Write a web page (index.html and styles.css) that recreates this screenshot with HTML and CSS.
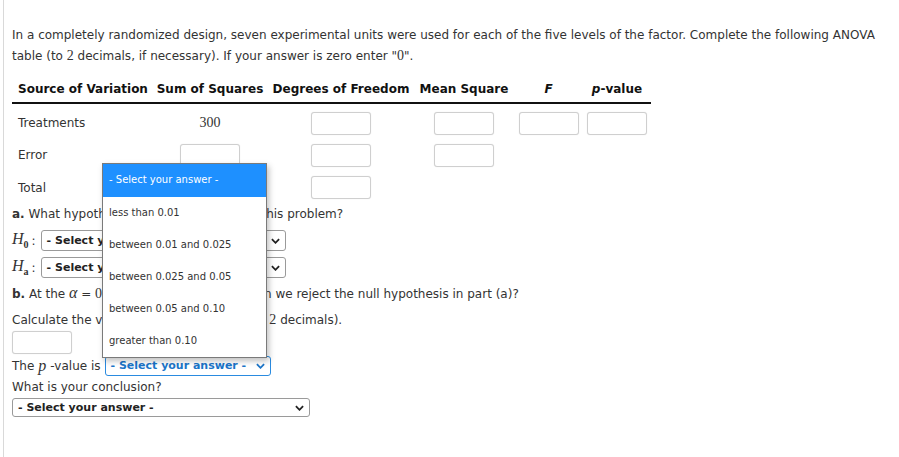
FILE: index.html
```html
<!DOCTYPE html>
<html lang="en">

<head>
    <meta charset="UTF-8">
    <title>ANOVA</title>
    <link rel="stylesheet" href="styles.css">
</head>

<body>
    <div class="page">
        <p class="intro">In a completely randomized design, seven experimental units were used for each of the five levels of the factor. Complete the following ANOVA table (to <span class="num">2</span> decimals, if necessary). If your answer is zero enter "<span class="num">0</span>".</p>

        <table class="anova">
            <colgroup>
                <col class="c1">
                <col class="c2">
                <col class="c3">
                <col class="c4">
                <col class="c5">
                <col class="c6">
            </colgroup>
            <thead>
                <tr>
                    <th class="src">Source of Variation</th>
                    <th>Sum of Squares</th>
                    <th>Degrees of Freedom</th>
                    <th>Mean Square</th>
                    <th><i>F</i></th>
                    <th><i>p</i>-value</th>
                </tr>
            </thead>
            <tbody>
                <tr class="row-first">
                    <td class="src">Treatments</td>
                    <td><span class="num">300</span></td>
                    <td><input class="box" type="text"></td>
                    <td><input class="box" type="text"></td>
                    <td><input class="box" type="text"></td>
                    <td><input class="box" type="text"></td>
                </tr>
                <tr class="row-mid">
                    <td class="src">Error</td>
                    <td><input class="box" type="text"></td>
                    <td><input class="box" type="text"></td>
                    <td><input class="box" type="text"></td>
                    <td></td>
                    <td></td>
                </tr>
                <tr>
                    <td class="src">Total</td>
                    <td></td>
                    <td><input class="box" type="text"></td>
                    <td></td>
                    <td></td>
                    <td></td>
                </tr>
            </tbody>
        </table>

        <p class="q q-a"><b>a.</b> What hypotheses should be tested for this problem?</p>
        <div class="hyp">
            <span class="math">H<sub>0</sub></span>:
            <div class="sel sel-hyp"><span>- Select your answer -</span><svg class="chev" viewBox="0 0 10 6"><path d="M1 1l4 4 4-4"/></svg></div>
        </div>
        <div class="hyp">
            <span class="math">H<sub>a</sub></span>:
            <div class="sel sel-hyp"><span>- Select your answer -</span><svg class="chev" viewBox="0 0 10 6"><path d="M1 1l4 4 4-4"/></svg></div>
        </div>

        <p class="q q-b"><b>b.</b> At the <span class="math">α</span> = <span class="num">0.05</span> level of significance, can we reject the null hypothesis in part (a)?</p>
        <p class="q q-calc">Calculate the value of the test statistic (to <span class="num">2</span> decimals).</p>
        <input class="box box-stat" type="text">

        <div class="pline">
            The <span class="math">p</span>-value is
            <div class="sel sel-p focus"><span>- Select your answer -</span><svg class="chev" viewBox="0 0 10 6"><path d="M1 1l4 4 4-4"/></svg></div>
        </div>
        <p class="q q-c">What is your conclusion?</p>
        <div class="sel sel-wide"><span>- Select your answer -</span><svg class="chev" viewBox="0 0 10 6"><path d="M1 1l4 4 4-4"/></svg></div>

        <!-- open list of the p-value select -->
        <ul class="drop">
            <li class="on">- Select your answer -</li>
            <li>less than 0.01</li>
            <li>between 0.01 and 0.025</li>
            <li>between 0.025 and 0.05</li>
            <li>between 0.05 and 0.10</li>
            <li>greater than 0.10</li>
        </ul>
    </div>
</body>

</html>
```

FILE: styles.css
```css
* {
    box-sizing: border-box;
    margin: 0;
    padding: 0;
}

body {
    background: #fff;
    color: #333;
    font-family: 'DejaVu Sans', Verdana, sans-serif;
    font-size: 12px;
}

.page {
    position: relative;
    margin-left: 3px;
    min-height: 457px;
    border-left: 1px solid #d9d9d9;
    padding: 25px 10px 0 8px;
}

.intro {
    line-height: 21px;
    width: 872px;
}

.num {
    font-family: 'Liberation Serif', serif;
    font-size: 14px;
    line-height: 1;
}

.math {
    font-family: 'Liberation Serif', serif;
    font-style: italic;
    font-size: 16px;
    line-height: 1;
}

.math sub {
    font-style: normal;
    font-weight: bold;
    font-size: 10px;
}

/* table */
.anova {
    margin-top: 8px;
    border-collapse: collapse;
    table-layout: fixed;
    width: 639px;
}

.c1 { width: 140px; }
.c2 { width: 116px; }
.c3 { width: 146px; }
.c4 { width: 100px; }
.c5 { width: 69px; }
.c6 { width: 68px; }

.anova th {
    font-weight: bold;
    text-align: center;
    height: 28px;
    border-bottom: 2px solid #111;
    color: #111;
    white-space: nowrap;
}

.anova td {
    text-align: center;
    height: 33px;
}

.anova .row-first td {
    height: 36px;
    padding-top: 3px;
}

.anova .row-mid td {
    height: 32px;
}

.anova .src {
    text-align: left;
    padding-left: 6px;
}

.box {
    width: 60px;
    height: 23px;
    border: 1px solid #cfcfcf;
    border-radius: 3px;
    box-shadow: 0 0 1px rgba(0, 0, 0, .15);
    vertical-align: middle;
}

/* questions */
.q {
    line-height: 20px;
}

.q-a {
    margin-top: 0;
}

.hyp {
    display: flex;
    align-items: center;
    gap: 3px;
    margin-top: 6px;
    height: 21px;
}

.hyp + .hyp {
    margin-top: 6px;
}

.sel {
    display: flex;
    align-items: center;
    justify-content: space-between;
    height: 21px;
    border: 1px solid #9a9a9a;
    border-radius: 3px;
    padding: 0 5px 0 5px;
    font-size: 11px;
    font-weight: bold;
    color: #222;
    background: #fff;
}

.sel-hyp {
    width: 245px;
    margin-left: 2px;
}

.chev {
    width: 9px;
    height: 6px;
    fill: none;
    stroke: #222;
    stroke-width: 2;
}

.q-b {
    margin-top: 6px;
}

.q-calc {
    margin-top: 6px;
}

.box-stat {
    display: block;
    margin-top: 1px;
    height: 23px;
}

.pline {
    display: flex;
    align-items: center;
    gap: 4px;
    height: 21px;
    line-height: 20px;
    margin-top: 1px;
}

.sel-p {
    width: 166px;
    height: 20px;
}

.focus {
    border-color: #2a8be0;
    color: #1b75c9;
}

.focus .chev {
    stroke: #1b75c9;
}

.q-c {
    margin-top: 1px;
}

.sel-wide {
    width: 298px;
    margin-top: 1px;
    height: 19px;
}

/* open list */
.drop {
    position: absolute;
    left: 98px;
    top: 163px;
    width: 165px;
    list-style: none;
    background: #fff;
    border: 1px solid #7a7a7a;
    box-shadow: 2px 3px 6px rgba(0, 0, 0, .25);
    font-size: 10px;
    color: #333;
}

.drop li {
    height: 32px;
    line-height: 32px;
    padding-left: 6px;
}

.drop .on {
    height: 33px;
    background: #1e90ff;
    color: #fff;
}
```
